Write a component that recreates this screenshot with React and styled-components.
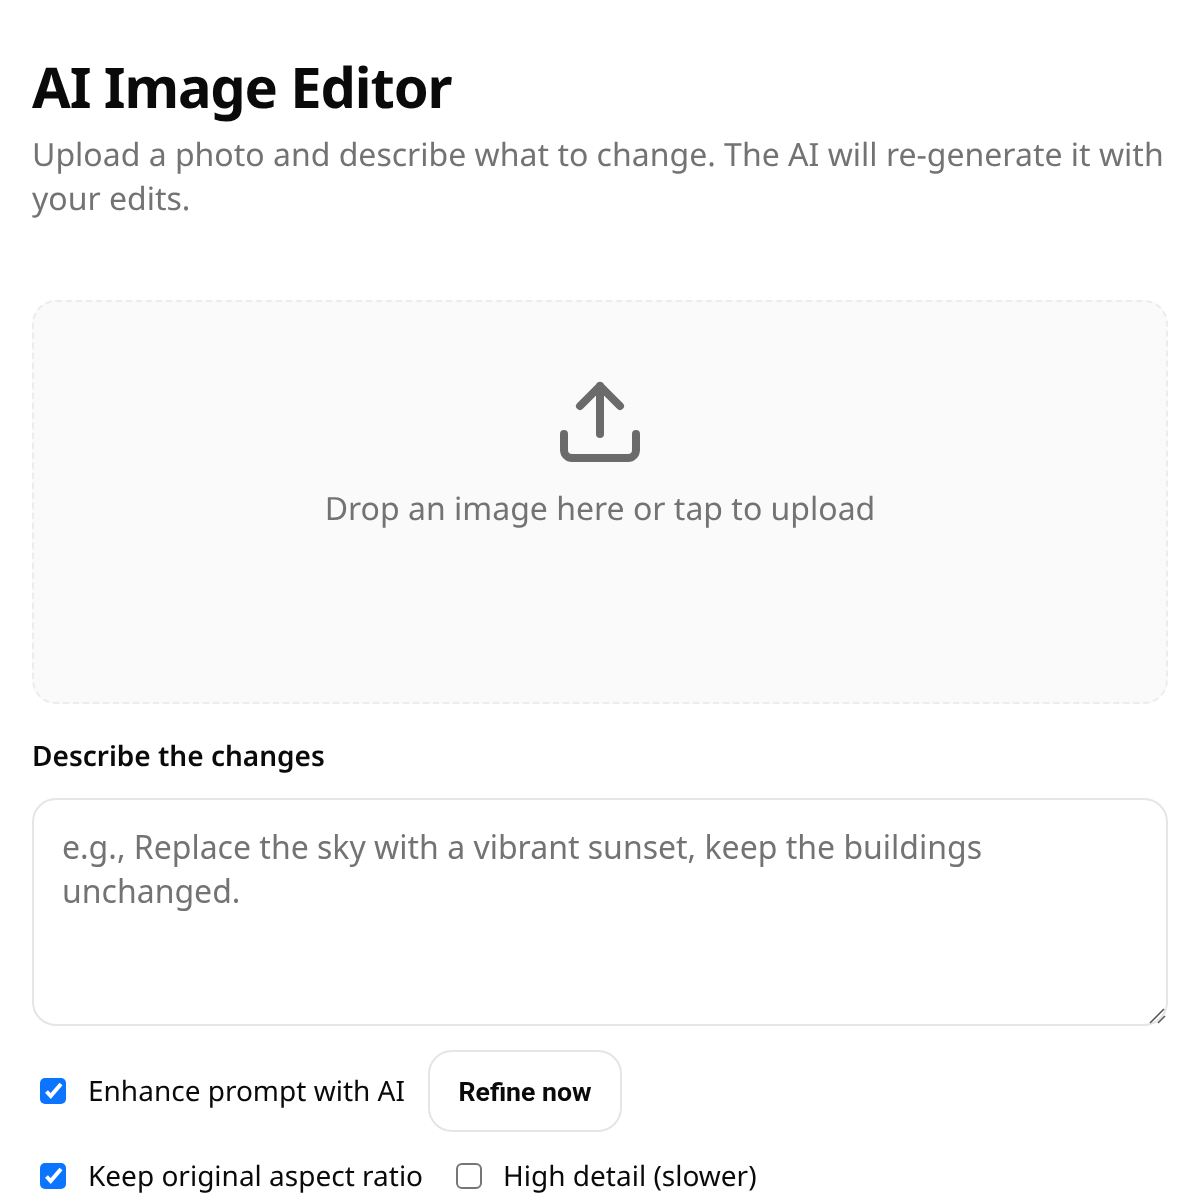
import React from "react";
import styled, { createGlobalStyle } from "styled-components";
import { Upload } from "lucide-react";

const GlobalStyle = createGlobalStyle`
  html, body {
    margin: 0;
    background: #fff;
  }
  body {
    font-family: "Noto Sans", sans-serif;
    color: #0a0a0a;
    height: 1200px;
    overflow: hidden;
    text-rendering: geometricPrecision;
  }
  * {
    box-sizing: border-box;
  }
`;

const Page = styled.main`
  padding: 47px 32px 0;
  will-change: transform;
`;

const Title = styled.h1`
  margin: 0 0 6px;
  font-size: 56px;
  line-height: 80px;
  font-weight: 700;
  letter-spacing: -0.02em;
`;

const Subtitle = styled.p`
  margin: 0 0 79px;
  font-size: 32px;
  line-height: 44px;
  color: #737373;
`;

const Dropzone = styled.div`
  height: 404px;
  border: 2px dashed #ececec;
  border-radius: 24px;
  background: #fafafa;
  display: flex;
  flex-direction: column;
  align-items: center;
  padding-top: 72px;
  gap: 17px;
  color: #6b6b6b;
`;

const DropText = styled.span`
  font-size: 32px;
  line-height: 44px;
  color: #737373;
`;

const Label = styled.label`
  display: block;
  margin: 32px 0 22px;
  font-size: 28px;
  line-height: 40px;
  font-weight: 600;
`;

const PromptWrap = styled.div`
  position: relative;
`;

const Prompt = styled.textarea`
  display: block;
  width: 100%;
  height: 228px;
  padding: 25px 28px;
  border: 2px solid #e5e5e5;
  border-radius: 24px;
  font-family: inherit;
  font-size: 32px;
  line-height: 44px;
  color: #0a0a0a;
  outline: none;
  resize: none;
  &::placeholder {
    color: #737373;
  }
`;

const ResizeGrip = styled.svg`
  position: absolute;
  right: 2px;
  bottom: 2px;
  width: 18px;
  height: 18px;
`;

const OptionRow = styled.div`
  display: flex;
  align-items: center;
  gap: 33px;
  margin-top: ${(p) => p.$top}px;
`;

const Option = styled.label`
  display: flex;
  align-items: center;
  gap: ${(p) => p.$gap}px;
  padding-left: ${(p) => p.$inset}px;
  font-size: 28px;
  line-height: 40px;
`;

const Check = styled.input`
  appearance: none;
  width: 26px;
  height: 26px;
  margin: 0;
  border: 2px solid #767676;
  border-radius: 6px;
  background: #fff;
  &:checked {
    border: none;
    border-radius: 5px;
    background: #0b75ff url("data:image/svg+xml,%3Csvg xmlns='http://www.w3.org/2000/svg' viewBox='0 0 26 26'%3E%3Cpath d='M6.5 13.5l4.2 4.5L21 6' fill='none' stroke='white' stroke-width='4'/%3E%3C/svg%3E") center / 100% no-repeat;
  }
`;

const RefineButton = styled.button`
  width: 194px;
  height: 82px;
  margin-left: -10px;
  padding: 0;
  border: 2px solid #e5e5e5;
  border-radius: 24px;
  background: #fff;
  font-family: Roboto, sans-serif;
  font-size: 26.6px;
  font-weight: 700;
  color: #0a0a0a;
`;

export default function App() {
  return (
    <>
      <GlobalStyle />
      <Page>
        <Title>AI Image Editor</Title>
        <Subtitle>Upload a photo and describe what to change. The AI will re-generate it with your edits.</Subtitle>
        <Dropzone>
          <Upload size={96} strokeWidth={2} />
          <DropText>Drop an image here or tap to upload</DropText>
        </Dropzone>
        <Label>Describe the changes</Label>
        <PromptWrap>
          <Prompt placeholder="e.g., Replace the sky with a vibrant sunset, keep the buildings unchanged." />
          <ResizeGrip viewBox="0 0 18 18" fill="none" stroke="#555" strokeWidth="1.5">
            <path d="M2 17 16 3" />
            <path d="M10 17l7-7" />
          </ResizeGrip>
        </PromptWrap>
        <OptionRow $top={24}>
          <Option $inset={8} $gap={22}>
            <Check type="checkbox" defaultChecked />
            Enhance prompt with AI
          </Option>
          <RefineButton>Refine now</RefineButton>
        </OptionRow>
        <OptionRow $top={24}>
          <Option $inset={8} $gap={22}>
            <Check type="checkbox" defaultChecked />
            Keep original aspect ratio
          </Option>
          <Option $inset={0} $gap={21}>
            <Check type="checkbox" />
            High detail (slower)
          </Option>
        </OptionRow>
      </Page>
    </>
  );
}
